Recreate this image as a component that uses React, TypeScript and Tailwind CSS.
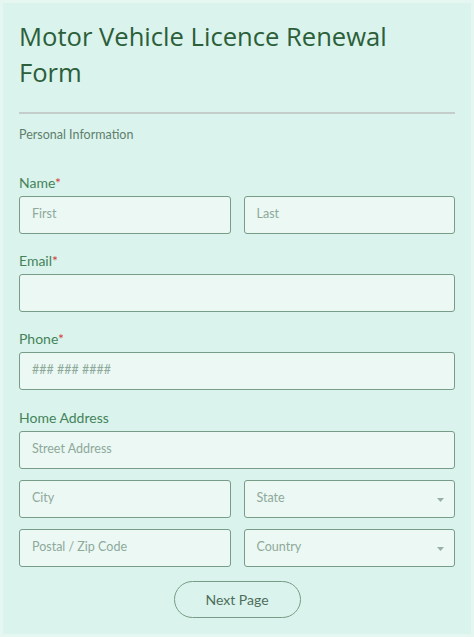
function Field({ placeholder, select }: { placeholder?: string; select?: boolean }) {
  return (
    <div className="relative flex h-[38px] min-w-0 items-center rounded-[3px] border border-[#779c87] bg-[#ebf8f4] px-3">
      <span className="text-[12.5px] text-[#8ea99a]">{placeholder}</span>
      {select && (
        <svg className="absolute right-[10px] top-[17px]" width="7" height="4" viewBox="0 0 7 4">
          <path d="M0 0h7L3.5 4z" fill="#9aaea3" />
        </svg>
      )}
    </div>
  );
}

function Label({ text, required }: { text: string; required?: boolean }) {
  return (
    <div className="mb-[4px] text-[14px] leading-[18px] text-[#44835a]">
      {text}
      {required && <span className="text-[#d23c3c]">*</span>}
    </div>
  );
}

export default function App() {
  return (
    <div className="min-h-[637px] w-[474px] border-[3px] border-[#e6f6f1] bg-[#daf3ec] font-['Lato',sans-serif]">
      <div className="px-[16px] pt-[16px]">
        <h1 className="font-['Open_Sans',sans-serif] text-[25.6px] leading-[36px] text-[#2b5e39]">
          Motor Vehicle Licence Renewal Form
        </h1>
        <div className="mt-[21px] border-t-2 border-[#c3cdc9]" />
        <p className="mt-[12px] text-[12.5px] text-[#5f7f6d]">Personal Information</p>

        <div className="mt-[29px]">
          <Label text="Name" required />
          <div className="grid grid-cols-2 gap-[13px]">
            <Field placeholder="First" />
            <Field placeholder="Last" />
          </div>
        </div>

        <div className="mt-[18px]">
          <Label text="Email" required />
          <Field />
        </div>

        <div className="mt-[18px]">
          <Label text="Phone" required />
          <Field placeholder="### ### ####" />
        </div>

        <div className="mt-[19px]">
          <Label text="Home Address" />
          <div className="flex flex-col gap-[11px]">
            <Field placeholder="Street Address" />
            <div className="grid grid-cols-2 gap-[13px]">
              <Field placeholder="City" />
              <Field placeholder="State" select />
            </div>
            <div className="grid grid-cols-2 gap-[13px]">
              <Field placeholder="Postal / Zip Code" />
              <Field placeholder="Country" select />
            </div>
          </div>
        </div>

        <div className="mt-[14px] flex justify-center">
          <button className="h-[37px] w-[127px] rounded-full border border-[#779c87] text-[14px] text-[#4d6e5b]">
            Next Page
          </button>
        </div>
      </div>
    </div>
  );
}
